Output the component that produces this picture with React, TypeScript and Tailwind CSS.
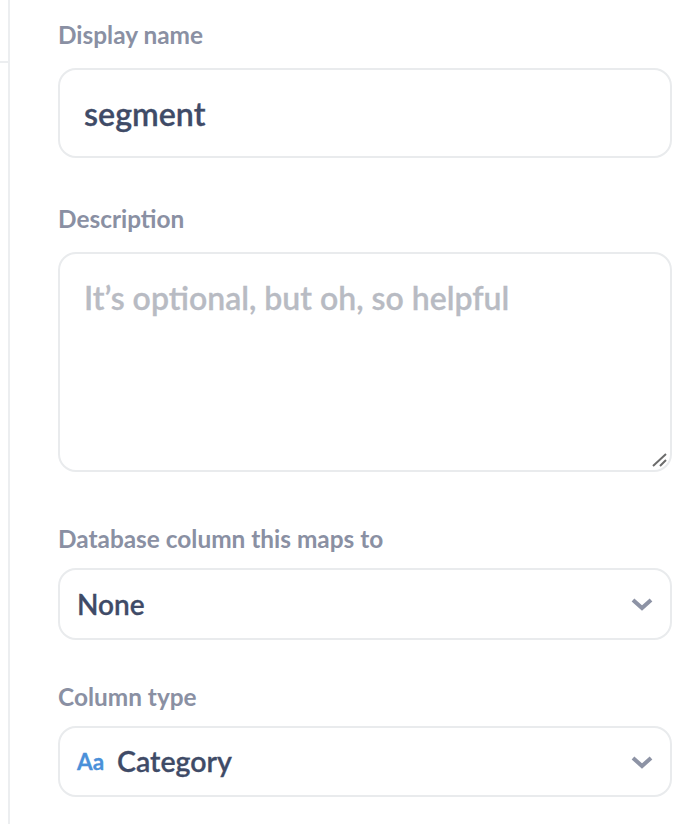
import React from "react";

function Chevron() {
  return (
    <svg width="22" height="14" viewBox="0 0 22 14" className="shrink-0">
      <path d="M2 3 L11 11 L20 3" fill="none" stroke="#8d93a5" strokeWidth="4" />
    </svg>
  );
}

function Label({ children, className }: { children: React.ReactNode; className: string }) {
  return <div className={`text-[24.4px] leading-[28px] font-bold text-[#8a90a3] ${className}`}>{children}</div>;
}

export default function App() {
  return (
    <div className="flex h-[824px] w-[694px] overflow-hidden bg-white font-['Lato',sans-serif]">
      <div className="w-[10px] shrink-0 border-r-2 border-[#eceef0]">
        <div className="h-[63px] border-b-2 border-[#eceef0]" />
      </div>
      <div className="flex w-[614px] ml-[48px] flex-col pt-[21px]">
        <Label className="">Display name</Label>
        <div className="mt-[19px] flex h-[90px] items-center rounded-[18px] border-2 border-[#e9ebed] px-[24px] pt-[3px] text-[32.2px] font-semibold text-[#3f4b67] [-webkit-text-stroke:0.3px_#3f4b67]">
          segment
        </div>
        <Label className="mt-[47px]">Description</Label>
        <div className="relative mt-[19px] h-[220px] rounded-[18px] border-2 border-[#e9ebed] px-[24px] pt-[24px] text-[32px] leading-[40px] font-semibold text-[#b8bbc3] [-webkit-text-stroke:0.3px_#b8bbc3]">
          It’s optional, but oh, so helpful
          <svg width="16" height="14" viewBox="0 0 16 14" className="absolute right-[2px] bottom-[3px]">
            <path d="M1 13 L14 1 M8 13 L14 7" stroke="#6c6c6c" strokeWidth="2" fill="none" />
          </svg>
        </div>
        <Label className="mt-[53px]">Database column this maps to</Label>
        <div className="mt-[15px] flex h-[72px] items-center justify-between rounded-[18px] border-2 border-[#e9ebed] pl-[17px] pr-[17px] text-[28px] font-semibold text-[#3f4b67] [-webkit-text-stroke:0.3px_#3f4b67]">
          None
          <Chevron />
        </div>
        <Label className="mt-[43px]">Column type</Label>
        <div className="mt-[15px] flex h-[71px] items-center justify-between rounded-[18px] border-2 border-[#e9ebed] pl-[17px] pr-[17px] text-[28.5px] font-semibold text-[#3f4b67] [-webkit-text-stroke:0.3px_#3f4b67]">
          <div className="flex items-center">
            <span className="w-[40px] text-[22.5px] font-bold text-[#4a90d9] [-webkit-text-stroke:0.3px_#4a90d9]">Aa</span>
            Category
          </div>
          <Chevron />
        </div>
      </div>
    </div>
  );
}
